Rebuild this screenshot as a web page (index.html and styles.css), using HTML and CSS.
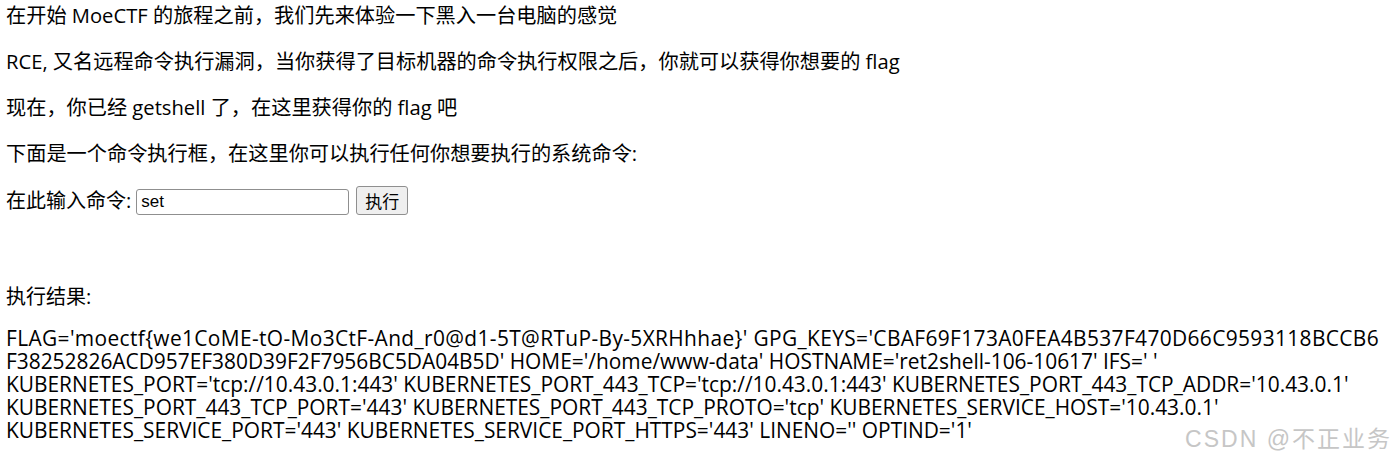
FILE: index.html
```html
<!DOCTYPE html>
<html lang="zh-CN">
<head>
<meta charset="utf-8">
<title>MoeCTF RCE</title>
<link rel="stylesheet" href="styles.css">
</head>
<body>
<main class="page">
  <p class="para">在开始 MoeCTF 的旅程之前，我们先来体验一下黑入一台电脑的感觉</p>
  <p class="para">RCE, 又名远程命令执行漏洞，当你获得了目标机器的命令执行权限之后，你就可以获得你想要的 flag</p>
  <p class="para">现在，你已经 getshell 了，在这里获得你的 flag 吧</p>
  <p class="para">下面是一个命令执行框，在这里你可以执行任何你想要执行的系统命令:</p>
  <form class="cmd-form">
    <label class="cmd-label" for="cmd">在此输入命令:</label>
    <input class="cmd-input" id="cmd" type="text" value="set">
    <button class="cmd-btn" type="button">执行</button>
  </form>
  <p class="result-title">执行结果:</p>
  <div class="result">
    <div class="line line-first">FLAG='moectf{we1CoME-tO-Mo3CtF-And_r0@d1-5T@RTuP-By-5XRHhhae}' GPG_KEYS='CBAF69F173A0FEA4B537F470D66C9593118BCCB6</div>
    <div class="line">F38252826ACD957EF380D39F2F7956BC5DA04B5D' HOME='/home/www-data' HOSTNAME='ret2shell-106-10617' IFS=' '</div>
    <div class="line">KUBERNETES_PORT='tcp://10.43.0.1:443' KUBERNETES_PORT_443_TCP='tcp://10.43.0.1:443' KUBERNETES_PORT_443_TCP_ADDR='10.43.0.1'</div>
    <div class="line">KUBERNETES_PORT_443_TCP_PORT='443' KUBERNETES_PORT_443_TCP_PROTO='tcp' KUBERNETES_SERVICE_HOST='10.43.0.1'</div>
    <div class="line">KUBERNETES_SERVICE_PORT='443' KUBERNETES_SERVICE_PORT_HTTPS='443' LINENO='' OPTIND='1'</div>
  </div>
</main>
<div class="watermark">CSDN @不正业务</div>
</body>
</html>
```

FILE: styles.css
```css
html, body {
  margin: 0;
  padding: 0;
  background: #ffffff;
}
body {
  font-family: "Open Sans", "Noto Sans CJK SC", sans-serif;
  font-size: 20px;
  color: #000;
  width: 1396px;
  height: 463px;
  overflow: hidden;
  position: relative;
}
.page {
  padding: 2px 0 0 6px;
}
.para {
  margin: 0 0 20px 0;
  font-size: 20.2px;
  line-height: 26px;
}
.cmd-form {
  display: flex;
  align-items: flex-end;
  height: 29px;
  margin: 0;
}
.cmd-label {
  align-self: center;
  margin-right: 5px;
  line-height: 26px;
}
.cmd-input {
  box-sizing: border-box;
  width: 213px;
  height: 26px;
  border: 1px solid #8f8f8f;
  border-radius: 3px;
  padding: 0 4px;
  font-family: "Liberation Sans", Arial, sans-serif;
  font-size: 17px;
  color: #000;
  margin: 0 7px 0 0;
}
.cmd-btn {
  box-sizing: border-box;
  width: 52px;
  height: 29px;
  border: 1px solid #8f8f8f;
  border-radius: 3px;
  background: #efefef;
  font-family: "Noto Sans CJK SC", sans-serif;
  font-size: 17px;
  color: #000;
  padding: 0;
  margin: 0;
}
.result-title {
  margin: 69px 0 17px 0;
  line-height: 26px;
}
.result {
  font-size: 20.9px;
  line-height: 23px;
}
.line {
  white-space: nowrap;
}
.line-first {
  letter-spacing: 0.37px;
}
.watermark {
  position: absolute;
  right: 4px;
  top: 428px;
  font-family: "Liberation Sans", "Noto Sans CJK SC", sans-serif;
  font-size: 23px;
  line-height: 1;
  color: #c6c6c6;
  text-shadow: 0 0 1px #ffffff;
  letter-spacing: 2px;
}
```
